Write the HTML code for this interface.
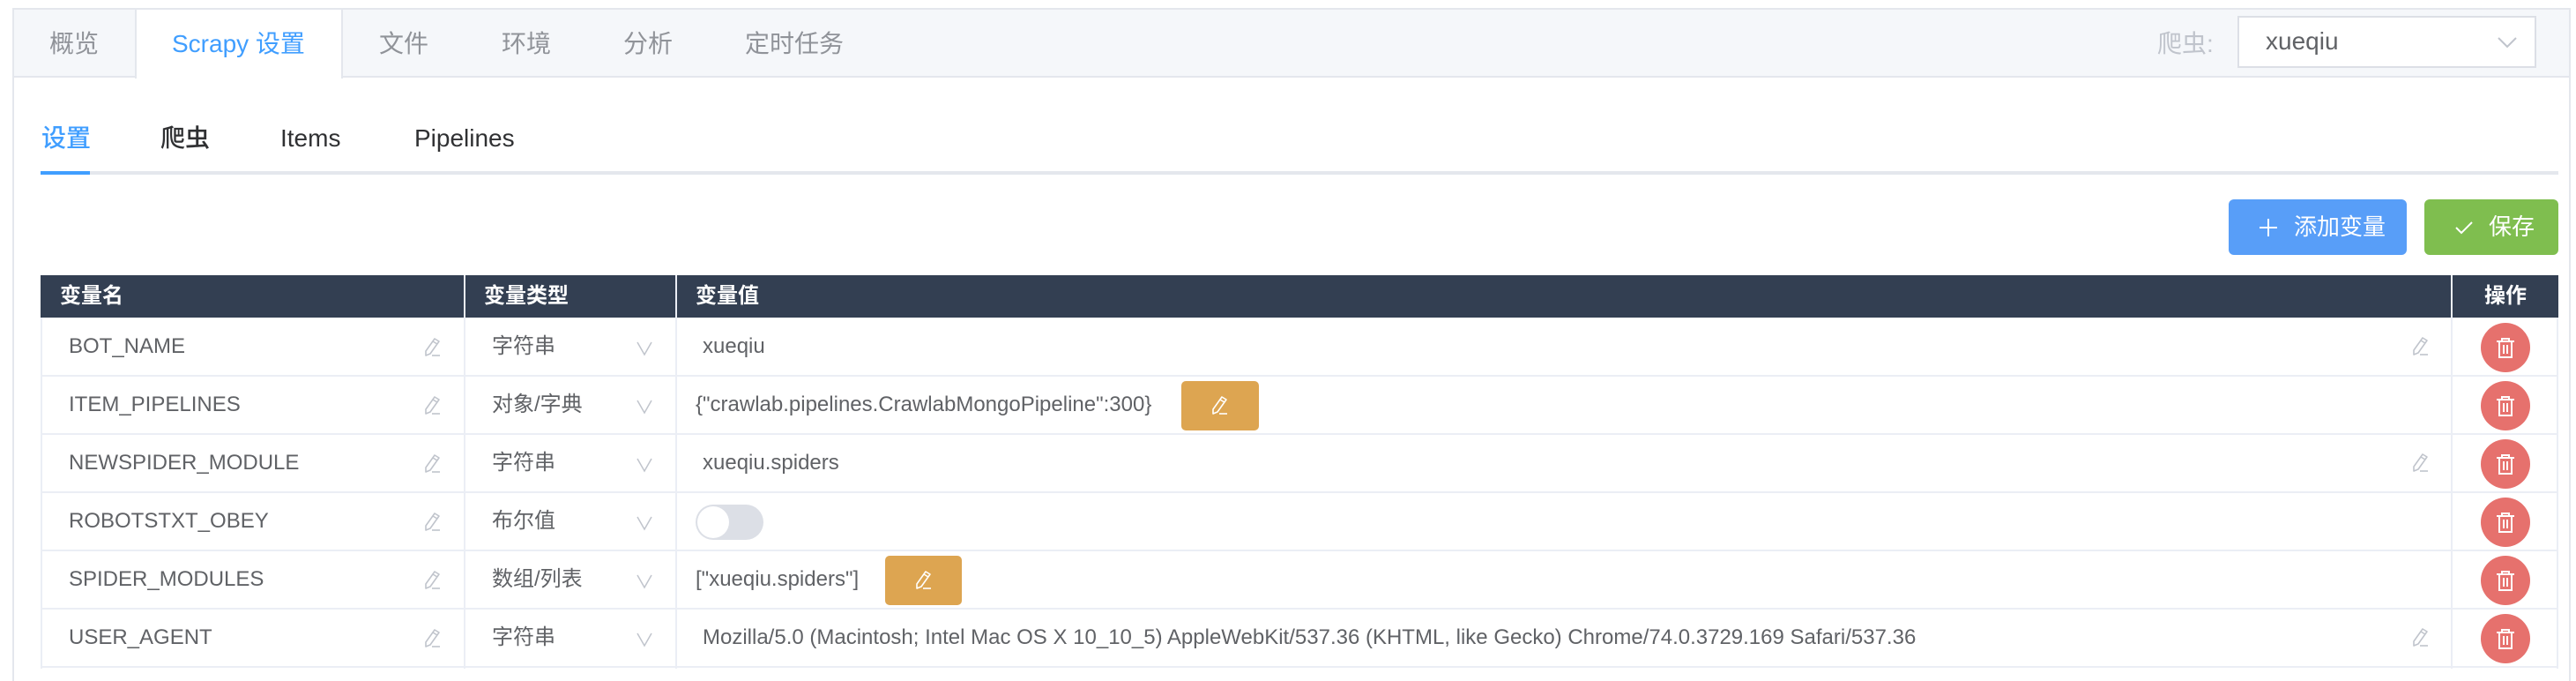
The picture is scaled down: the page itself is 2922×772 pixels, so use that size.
<!DOCTYPE html>
<html><head><meta charset="utf-8"><style>
*{margin:0;padding:0;box-sizing:border-box}
html,body{width:2922px;height:772px;overflow:hidden}
body{background:#fff;position:relative;font-family:"Liberation Sans","Noto Sans CJK SC",sans-serif;color:#606266}
.a{position:absolute}
.card{left:14px;top:9px;width:2902px;height:790px;border:2px solid #e4e7ed;background:#fff}
.hdr{left:16px;top:11px;width:2898px;height:77px;background:#f5f7fa;border-bottom:2px solid #e4e7ed}
.tab{top:34px;font-size:28px;color:#909399;line-height:32px;white-space:nowrap}
.sub{top:140px;font-size:28px;color:#303133;line-height:34px;font-weight:500}
.th{top:312px;height:48px;background:#333f52;}
.tht{color:#fff;font-size:24px;font-weight:bold;top:323px;line-height:26px}
.hl{height:2px;background:#ebeef5;left:46px;width:2856px}
.vl{width:2px;background:#ebeef5;top:360px;height:398px}
.t{font-size:24px;line-height:28px;white-space:nowrap}
.del{width:56px;height:56px;border-radius:50%;background:#e6716d;left:2814px}
</style></head><body>
<div class="a card"></div>
<div class="a hdr"></div>
<div class="a" style="left:153px;top:11px;width:236px;height:78px;background:#fff;border-left:2px solid #e4e7ed;border-right:2px solid #e4e7ed"></div>
<div class="a tab" style="left:56px">概览</div>
<div class="a tab" style="left:195px;color:#409eff">Scrapy 设置</div>
<div class="a tab" style="left:430px">文件</div>
<div class="a tab" style="left:569px">环境</div>
<div class="a tab" style="left:707px">分析</div>
<div class="a tab" style="left:845px">定时任务</div>
<div class="a tab" style="left:2447px;color:#c0c4cc">爬虫:</div>
<div class="a" style="left:2538px;top:18px;width:339px;height:59px;border:2px solid #dcdfe6;background:#fff"></div>
<div class="a" style="left:2570px;top:30px;font-size:28px;color:#606266;line-height:34px">xueqiu</div>
<svg class="a" style="left:2832px;top:40px" width="24" height="16"><path d="M2 3 L12 13 L22 3" fill="none" stroke="#c0c4cc" stroke-width="2"/></svg>

<div class="a sub" style="left:47px;color:#409eff">设置</div>
<div class="a sub" style="left:182px">爬虫</div>
<div class="a sub" style="left:318px">Items</div>
<div class="a sub" style="left:470px">Pipelines</div>
<div class="a" style="left:46px;top:194px;width:2856px;height:4px;background:#e4e7ed"></div>
<div class="a" style="left:46px;top:194px;width:56px;height:4px;background:#409eff"></div>

<div class="a" style="left:2528px;top:226px;width:202px;height:63px;background:#589ef8;border-radius:6px"></div>
<svg class="a" style="left:2562px;top:247px" width="22" height="22"><path d="M11 1V21M1 11H21" stroke="#fff" stroke-width="2"/></svg>
<div class="a" style="left:2602px;top:242px;font-size:26px;color:#fff;line-height:30px">添加变量</div>
<div class="a" style="left:2750px;top:226px;width:152px;height:63px;background:#7fbe4f;border-radius:6px"></div>
<svg class="a" style="left:2784px;top:249px" width="22" height="18"><path d="M2 9L8 15L20 3" fill="none" stroke="#fff" stroke-width="2"/></svg>
<div class="a" style="left:2823px;top:242px;font-size:26px;color:#fff;line-height:30px">保存</div>

<div class="a th" style="left:46px;width:2856px"></div>
<div class="a" style="left:526px;top:312px;width:2px;height:48px;background:#ebeef5"></div>
<div class="a" style="left:766px;top:312px;width:2px;height:48px;background:#ebeef5"></div>
<div class="a" style="left:2780px;top:312px;width:2px;height:48px;background:#ebeef5"></div>
<div class="a tht" style="left:68px">变量名</div>
<div class="a tht" style="left:549px">变量类型</div>
<div class="a tht" style="left:789px">变量值</div>
<div class="a tht" style="left:2818px">操作</div>

<div class="a hl" style="top:425px"></div>
<div class="a hl" style="top:491px"></div>
<div class="a hl" style="top:557px"></div>
<div class="a hl" style="top:623px"></div>
<div class="a hl" style="top:689px"></div>
<div class="a hl" style="top:755px"></div>
<div class="a vl" style="left:46px"></div>
<div class="a vl" style="left:526px"></div>
<div class="a vl" style="left:766px"></div>
<div class="a vl" style="left:2780px"></div>
<div class="a vl" style="left:2900px"></div>

<svg width="0" height="0" style="position:absolute"><defs>
<g id="pen"><path d="M14 2 L19 5 L9 19 L4 21 L4 16 Z M12 5 L17 8" fill="none" stroke="currentColor" stroke-width="1.6" stroke-linejoin="round"/><path d="M11 21 H20" stroke="currentColor" stroke-width="1.6"/></g>
<g id="arr"><path d="M2 3 L10 17 L18 3" fill="none" stroke="#c0c4cc" stroke-width="1.5"/></g>
<g id="bin"><path d="M3 6H23M9 6V3H17V6M6 6V24H20V6M11 10V20M15 10V20" fill="none" stroke="#fff" stroke-width="2"/></g>
</defs></svg>

<div class="a t" style="left:78px;top:379px">BOT_NAME</div>
<div class="a t" style="left:78px;top:445px">ITEM_PIPELINES</div>
<div class="a t" style="left:78px;top:511px">NEWSPIDER_MODULE</div>
<div class="a t" style="left:78px;top:577px">ROBOTSTXT_OBEY</div>
<div class="a t" style="left:78px;top:643px">SPIDER_MODULES</div>
<div class="a t" style="left:78px;top:709px">USER_AGENT</div>

<svg class="a" style="left:479px;top:382px;color:#c0c4cc" width="24" height="24"><use href="#pen"/></svg>
<svg class="a" style="left:479px;top:448px;color:#c0c4cc" width="24" height="24"><use href="#pen"/></svg>
<svg class="a" style="left:479px;top:514px;color:#c0c4cc" width="24" height="24"><use href="#pen"/></svg>
<svg class="a" style="left:479px;top:580px;color:#c0c4cc" width="24" height="24"><use href="#pen"/></svg>
<svg class="a" style="left:479px;top:646px;color:#c0c4cc" width="24" height="24"><use href="#pen"/></svg>
<svg class="a" style="left:479px;top:712px;color:#c0c4cc" width="24" height="24"><use href="#pen"/></svg>

<div class="a t" style="left:558px;top:379px">字符串</div>
<div class="a t" style="left:558px;top:445px">对象/字典</div>
<div class="a t" style="left:558px;top:511px">字符串</div>
<div class="a t" style="left:558px;top:577px">布尔值</div>
<div class="a t" style="left:558px;top:643px">数组/列表</div>
<div class="a t" style="left:558px;top:709px">字符串</div>
<svg class="a" style="left:721px;top:385px" width="20" height="20"><use href="#arr"/></svg>
<svg class="a" style="left:721px;top:451px" width="20" height="20"><use href="#arr"/></svg>
<svg class="a" style="left:721px;top:517px" width="20" height="20"><use href="#arr"/></svg>
<svg class="a" style="left:721px;top:583px" width="20" height="20"><use href="#arr"/></svg>
<svg class="a" style="left:721px;top:649px" width="20" height="20"><use href="#arr"/></svg>
<svg class="a" style="left:721px;top:715px" width="20" height="20"><use href="#arr"/></svg>

<div class="a t" style="left:797px;top:379px">xueqiu</div>
<div class="a t" style="left:789px;top:445px">{"crawlab.pipelines.CrawlabMongoPipeline":300}</div>
<div class="a" style="left:1340px;top:432px;width:88px;height:56px;background:#dda551;border-radius:5px"></div>
<svg class="a" style="left:1372px;top:448px;color:#fff" width="24" height="24"><use href="#pen"/></svg>
<div class="a t" style="left:797px;top:511px">xueqiu.spiders</div>
<div class="a" style="left:789px;top:572px;width:77px;height:40px;border-radius:20px;background:#dcdfe6"></div>
<div class="a" style="left:791px;top:574px;width:36px;height:36px;border-radius:50%;background:#fff"></div>
<div class="a t" style="left:789px;top:643px">["xueqiu.spiders"]</div>
<div class="a" style="left:1004px;top:630px;width:87px;height:56px;background:#dda551;border-radius:5px"></div>
<svg class="a" style="left:1036px;top:646px;color:#fff" width="24" height="24"><use href="#pen"/></svg>
<div class="a t" style="left:797px;top:709px">Mozilla/5.0 (Macintosh; Intel Mac OS X 10_10_5) AppleWebKit/537.36 (KHTML, like Gecko) Chrome/74.0.3729.169 Safari/537.36</div>
<svg class="a" style="left:2734px;top:381px;color:#c0c4cc" width="24" height="24"><use href="#pen"/></svg>
<svg class="a" style="left:2734px;top:513px;color:#c0c4cc" width="24" height="24"><use href="#pen"/></svg>
<svg class="a" style="left:2734px;top:711px;color:#c0c4cc" width="24" height="24"><use href="#pen"/></svg>

<div class="a del" style="top:366px"></div>
<div class="a del" style="top:432px"></div>
<div class="a del" style="top:498px"></div>
<div class="a del" style="top:564px"></div>
<div class="a del" style="top:630px"></div>
<div class="a del" style="top:696px"></div>
<svg class="a" style="left:2829px;top:381px" width="26" height="26"><use href="#bin"/></svg>
<svg class="a" style="left:2829px;top:447px" width="26" height="26"><use href="#bin"/></svg>
<svg class="a" style="left:2829px;top:513px" width="26" height="26"><use href="#bin"/></svg>
<svg class="a" style="left:2829px;top:579px" width="26" height="26"><use href="#bin"/></svg>
<svg class="a" style="left:2829px;top:645px" width="26" height="26"><use href="#bin"/></svg>
<svg class="a" style="left:2829px;top:711px" width="26" height="26"><use href="#bin"/></svg>
</body></html>
